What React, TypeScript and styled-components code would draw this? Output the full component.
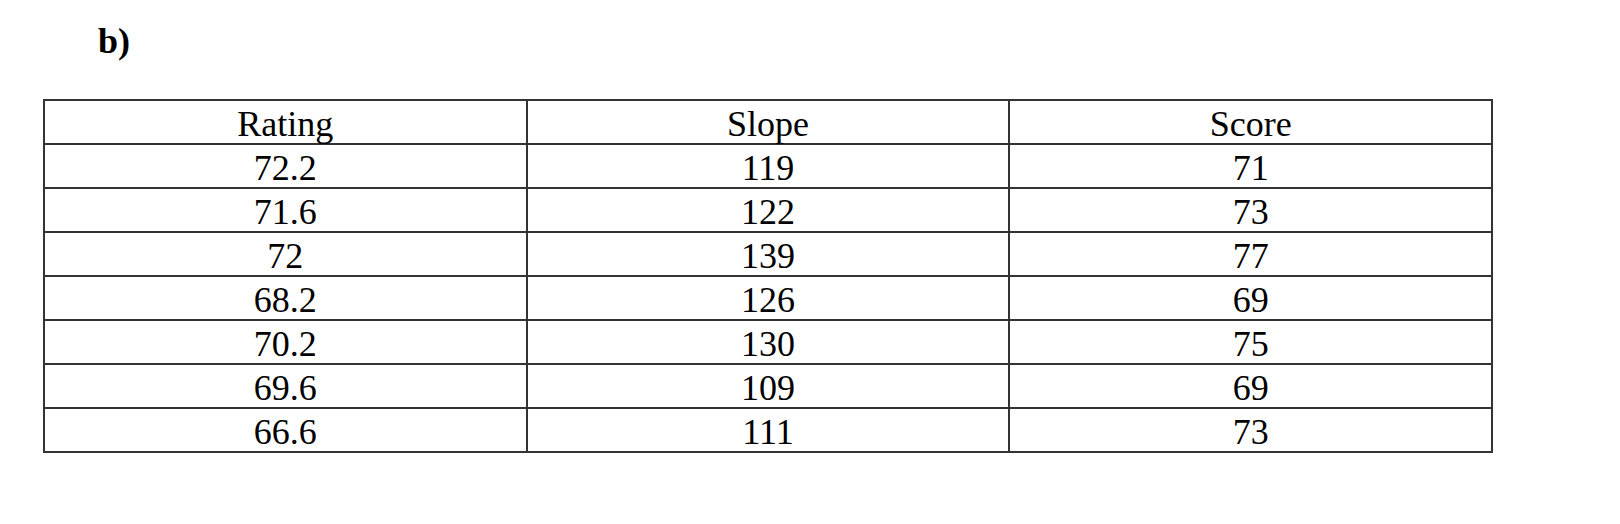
import React from 'react'
import styled, { createGlobalStyle } from 'styled-components'

const GlobalStyle = createGlobalStyle`
    html, body {
        margin: 0;
        padding: 0;
        background: #ffffff;
    }
    body {
        font-family: "Liberation Serif", "Times New Roman", serif;
        color: #000000;
    }
`

const rows: [string, string, string][] = [
    ['72.2', '119', '71'],
    ['71.6', '122', '73'],
    ['72', '139', '77'],
    ['68.2', '126', '69'],
    ['70.2', '130', '75'],
    ['69.6', '109', '69'],
    ['66.6', '111', '73'],
]

const App: React.FC = () => {
    return (
        <Page>
            <GlobalStyle />
            <Label>b)</Label>
            <Table>
                <thead>
                    <tr>
                        <Cell as="th">Rating</Cell>
                        <Cell as="th">Slope</Cell>
                        <Cell as="th">Score</Cell>
                    </tr>
                </thead>
                <tbody>
                    {rows.map((r, i) => (
                        <tr key={i}>
                            {r.map((v, j) => (
                                <Cell key={j}>{v}</Cell>
                            ))}
                        </tr>
                    ))}
                </tbody>
            </Table>
        </Page>
    )
}

const Page = styled.div`
    width: 1620px;
    height: 524px;
    padding: 23px 0 0 43px;
    box-sizing: border-box;
    display: flex;
    flex-direction: column;
    align-items: flex-start;
`

const Label = styled.div`
    margin-left: 55px;
    font-size: 36px;
    line-height: 36px;
    font-weight: bold;
`

const Table = styled.table`
    margin-top: 40px;
    width: 1450px;
    border-collapse: collapse;
    table-layout: fixed;
    border: 2px solid #333333;
`

const Cell = styled.td`
    height: 44px;
    padding: 3px 0 0 0;
    box-sizing: border-box;
    border: 2px solid #333333;
    text-align: center;
    vertical-align: middle;
    font-size: 36px;
    font-weight: normal;
    line-height: 38px;
`

export default App
